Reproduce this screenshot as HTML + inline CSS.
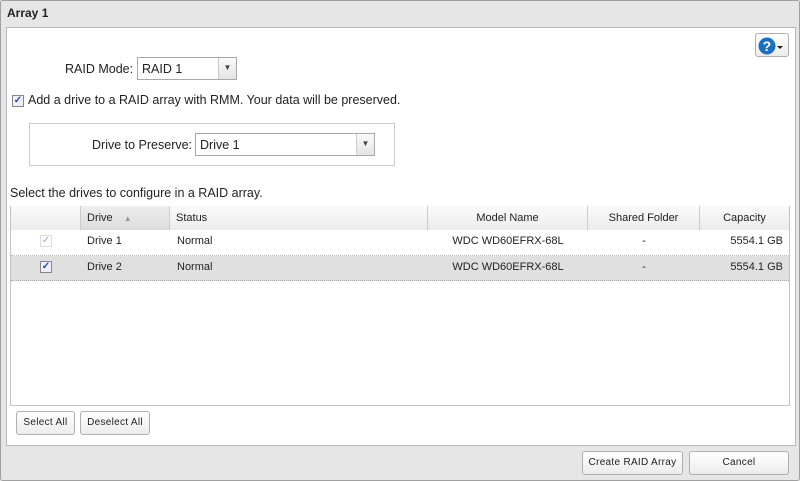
<!DOCTYPE html>
<html><head><style>
*{box-sizing:border-box;margin:0;padding:0}
body{width:800px;height:481px;background:#e6e6e6;font-family:"Liberation Sans",Tahoma,sans-serif;font-size:12px;color:#222;position:relative;overflow:hidden}
.abs{position:absolute}
.outer{left:0;top:0;width:800px;height:481px;border:1px solid #a0a0a0;border-radius:3px}
.panel{left:6px;top:27px;width:790px;height:419px;background:#fff;border:1px solid #b8b8b8}
.sel{background:#fff;border:1px solid #a8a8a8;height:23px;font-size:12.5px;padding:4px 4px}
.arr{position:absolute;right:0;top:0;width:18px;height:21px;border-left:1px solid #ccc;background:linear-gradient(#fafafa,#e4e4e4);font-size:8px;text-align:center;line-height:20px;color:#444}
.cb{width:12px;height:12px;border:1px solid #888;background:#eef;font-size:10px;line-height:10px;text-align:center;color:#2848a8;font-weight:bold}
.th{top:206px;height:24px;border-right:1px solid #ccc;font-size:11px;line-height:25px;padding-left:6px;background:linear-gradient(#fafafa,#ececec)}
.td{font-size:11px;line-height:25px}
.btn{border:1px solid #b0b0b0;border-radius:3px;background:linear-gradient(#fff,#ececec);font-size:10px;text-align:center;line-height:22px;height:24px;font-family:"Liberation Sans",sans-serif;letter-spacing:0.3px}
</style></head><body>
<div class="abs outer"></div>
<div class="abs" style="left:7px;top:6px;font-weight:bold;font-size:12px">Array 1</div>
<div class="abs panel"></div>
<div class="abs btn" style="left:755px;top:33px;width:34px;height:24px;padding-top:2px"><svg width="30" height="20"><circle cx="10" cy="10" r="8.5" fill="#1a6fc4"/><text x="10" y="15" font-size="14" font-weight="bold" fill="#fff" text-anchor="middle" font-family="Liberation Sans">?</text><path d="M20 10h6l-3 3z" fill="#222"/></svg></div>
<div class="abs" style="left:65px;top:62px;font-size:12.5px">RAID Mode:</div>
<div class="abs sel" style="left:137px;top:57px;width:100px">RAID 1<div class="arr">▼</div></div>
<div class="abs cb" style="left:12px;top:95px">✓</div>
<div class="abs" style="left:28px;top:93px;font-size:12.5px">Add a drive to a RAID array with RMM. Your data will be preserved.</div>
<div class="abs" style="left:29px;top:123px;width:366px;height:43px;border:1px solid #ccc"></div>
<div class="abs" style="left:92px;top:138px;font-size:12.5px">Drive to Preserve:</div>
<div class="abs sel" style="left:195px;top:133px;width:180px">Drive 1<div class="arr">▼</div></div>
<div class="abs" style="left:10px;top:186px;font-size:12.5px">Select the drives to configure in a RAID array.</div>
<div class="abs" style="left:10px;top:206px;width:780px;height:200px;border:1px solid #c4c4c4"></div>
<div class="abs th" style="left:11px;width:70px"></div>
<div class="abs th" style="left:81px;width:89px;background:linear-gradient(#eee,#dcdcdc)">Drive <span style="color:#999;font-size:8px;margin-left:8px">▲</span></div>
<div class="abs th" style="left:170px;width:258px">Status</div>
<div class="abs th" style="left:428px;width:160px;text-align:center;padding:0">Model Name</div>
<div class="abs th" style="left:588px;width:112px;text-align:center;padding:0">Shared Folder</div>
<div class="abs th" style="left:700px;width:89px;text-align:center;padding:0;border-right:none">Capacity</div>
<div class="abs" style="left:11px;top:230px;width:778px;height:26px;border-bottom:1px dotted #bbb"></div>
<div class="abs" style="left:11px;top:256px;width:778px;height:25px;background:#e0e0e0;border-bottom:1px dotted #aaa"></div>
<div class="abs cb" style="left:40px;top:235px;border-color:#ddd;background:#fff;color:#8ab0e8;font-weight:normal">✓</div>
<div class="abs cb" style="left:40px;top:261px">✓</div>
<div class="abs td" style="left:87px;top:229px">Drive 1</div><div class="abs td" style="left:177px;top:229px">Normal</div>
<div class="abs td" style="left:428px;top:229px;width:160px;text-align:center">WDC WD60EFRX-68L</div>
<div class="abs td" style="left:588px;top:229px;width:112px;text-align:center">-</div>
<div class="abs td" style="left:700px;top:229px;width:83px;text-align:right">5554.1 GB</div>
<div class="abs td" style="left:87px;top:255px">Drive 2</div><div class="abs td" style="left:177px;top:255px">Normal</div>
<div class="abs td" style="left:428px;top:255px;width:160px;text-align:center">WDC WD60EFRX-68L</div>
<div class="abs td" style="left:588px;top:255px;width:112px;text-align:center">-</div>
<div class="abs td" style="left:700px;top:255px;width:83px;text-align:right">5554.1 GB</div>
<div class="abs btn" style="left:16px;top:411px;width:59px">Select All</div>
<div class="abs btn" style="left:80px;top:411px;width:70px">Deselect All</div>
<div class="abs btn" style="left:582px;top:451px;width:101px">Create RAID Array</div>
<div class="abs btn" style="left:689px;top:451px;width:100px">Cancel</div>
</body></html>
